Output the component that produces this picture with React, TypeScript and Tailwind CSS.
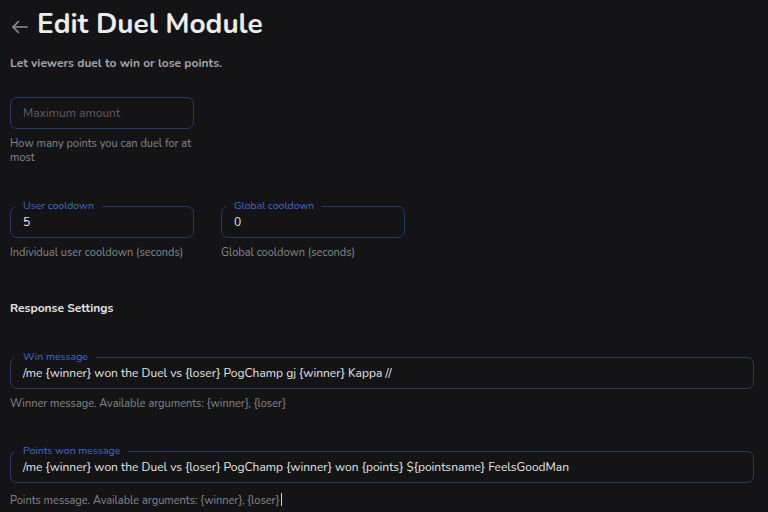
const font = { fontFamily: "Nunito, Lato, 'Open Sans', sans-serif" };

function OutlinedField({
  label,
  value,
  placeholder,
}: {
  label?: string;
  value?: string;
  placeholder?: string;
}) {
  return (
    <div className="relative h-[32px] rounded-[7px] border border-[#22396b]">
      {label ? (
        <span className="absolute -top-[8px] left-[4px] bg-[#141417] px-[8px] text-[10.5px] leading-[14px] text-[#3f6cc4]">
          {label}
        </span>
      ) : null}
      <div
        className={`flex h-full items-center px-[12px] text-[12px] ${
          value ? "text-[#e6e6e6]" : "text-[#5c5c60]"
        }`}
      >
        {value ?? placeholder}
      </div>
    </div>
  );
}

function Helper({ children }: { children: React.ReactNode }) {
  return <p className="mt-[8px] text-[11px] leading-[14px] text-[#86868a]">{children}</p>;
}

export default function App() {
  return (
    <div className="min-h-[512px] w-[768px] overflow-hidden bg-[#141417] px-[10px]" style={font}>
      <div className="flex items-center gap-[9px] pt-[6px]">
        <svg
          width="17"
          height="14"
          viewBox="0 0 17 14"
          fill="none"
          stroke="#8f8f93"
          strokeWidth="1.6"
          strokeLinecap="round"
          strokeLinejoin="round"
          className="ml-[1px] translate-y-[3px]"
        >
          <path d="M16 7H2" />
          <path d="M7.5 1.5L2 7l5.5 5.5" />
        </svg>
        <h1 className="text-[28px] font-bold leading-[36px] text-[#ececee]">Edit Duel Module</h1>
      </div>
      <p className="mt-[13px] text-[12px] font-bold leading-[16px] text-[#a4a4a8]">
        Let viewers duel to win or lose points.
      </p>

      <div className="mt-[26px] w-[184px]">
        <OutlinedField placeholder="Maximum amount" />
        <Helper>How many points you can duel for at most</Helper>
      </div>

      <div className="mt-[41px] flex gap-[27px]">
        <div className="w-[184px]">
          <OutlinedField label="User cooldown" value="5" />
          <Helper>Individual user cooldown (seconds)</Helper>
        </div>
        <div className="w-[184px]">
          <OutlinedField label="Global cooldown" value="0" />
          <Helper>Global cooldown (seconds)</Helper>
        </div>
      </div>

      <h2 className="mt-[40px] text-[12px] font-bold leading-[16px] text-[#e2e2e4]">Response Settings</h2>

      <div className="mt-[41px] w-[744px]">
        <OutlinedField
          label="Win message"
          value="/me {winner} won the Duel vs {loser} PogChamp gj {winner} Kappa //"
        />
        <Helper>Winner message. Available arguments: {"{winner}"}, {"{loser}"}</Helper>
      </div>

      <div className="mt-[40px] w-[744px]">
        <OutlinedField
          label="Points won message"
          value="/me {winner} won the Duel vs {loser} PogChamp {winner} won {points} ${pointsname} FeelsGoodMan"
        />
        <Helper>
          Points message. Available arguments: {"{winner}"}, {"{loser}"}
          <span className="ml-[1px] inline-block h-[13px] w-[1px] translate-y-[2px] bg-[#d0d0d0]" />
        </Helper>
      </div>
    </div>
  );
}
